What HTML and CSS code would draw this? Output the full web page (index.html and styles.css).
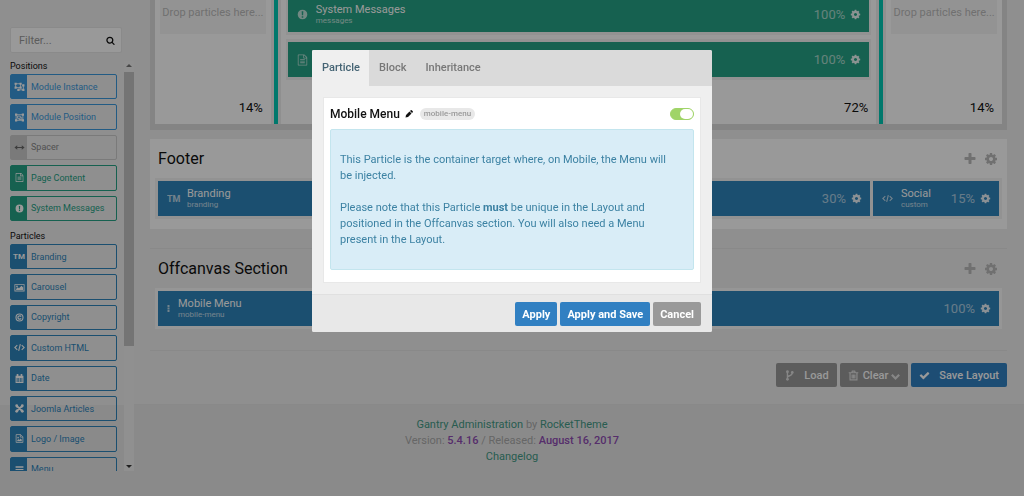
FILE: index.html
```html
<!DOCTYPE html>
<html lang="en">
<head>
    <meta charset="UTF-8">
    <meta name="viewport" content="width=device-width, initial-scale=1.0">
    <title>Gantry Layout</title>
    <link rel="stylesheet" href="styles.css">
</head>
<body>
    <svg class="sprite" aria-hidden="true">
        <symbol id="cog" viewBox="0 0 1792 1792"><path d="M1152 896q0-106-75-181t-181-75-181 75-75 181 75 181 181 75 181-75 75-181zm512-109v222q0 12-8 23t-20 13l-185 28q-19 54-39 91 35 50 107 138 10 12 10 25t-9 23q-27 37-99 108t-94 71q-12 0-26-9l-138-108q-44 23-91 38-16 136-29 186-7 28-36 28h-222q-14 0-24.5-8.5t-11.5-21.5l-28-184q-49-16-90-37l-141 107q-10 9-25 9-14 0-25-11-126-114-165-168-7-10-7-23 0-12 8-23 15-21 51-66.5t54-70.5q-27-50-41-99l-183-27q-13-2-21-12.5t-8-23.5v-222q0-12 8-23t19-13l186-28q14-46 39-92-40-57-107-138-10-12-10-24 0-10 9-23 26-36 98.5-107.5t94.5-71.5q13 0 26 10l138 107q44-23 91-38 16-136 29-186 7-28 36-28h222q14 0 24.5 8.5t11.5 21.5l28 184q49 16 90 37l142-107q9-9 24-9 13 0 25 10 129 119 165 170 7 8 7 22 0 12-8 23-15 21-51 66.5t-54 70.5q26 50 41 98l183 28q13 2 21 12.5t8 23.5z"/></symbol>
        <symbol id="plus" viewBox="0 0 1792 1792"><path d="M1600 736v192q0 40-28 68t-68 28h-416v416q0 40-28 68t-68 28h-192q-40 0-68-28t-28-68v-416h-416q-40 0-68-28t-28-68v-192q0-40 28-68t68-28h416v-416q0-40 28-68t68-28h192q40 0 68 28t28 68v416h416q40 0 68 28t28 68z"/></symbol>
        <symbol id="search" viewBox="0 0 1792 1792"><path d="M1216 832q0-185-131.5-316.5t-316.5-131.5-316.5 131.5-131.5 316.5 131.5 316.5 316.5 131.5 316.5-131.5 131.5-316.5zm512 832q0 52-38 90t-90 38q-54 0-90-38l-343-342q-179 124-399 124-143 0-273.5-55.5t-225-150-150-225-55.5-273.5 55.5-273.5 150-225 225-150 273.5-55.5 273.5 55.5 225 150 150 225 55.5 273.5q0 220-124 399l343 343q37 37 37 90z"/></symbol>
        <symbol id="check" viewBox="0 0 1792 1792"><path d="M1671 566q0 40-28 68l-724 724-136 136q-28 28-68 28t-68-28l-136-136-362-362q-28-28-28-68t28-68l136-136q28-28 68-28t68 28l294 295 656-657q28-28 68-28t68 28l136 136q28 28 28 68z"/></symbol>
        <symbol id="file-text" viewBox="0 0 1792 1792"><path d="M1596 380q28 28 48 76t20 88v1152q0 40-28 68t-68 28h-1344q-40 0-68-28t-28-68v-1600q0-40 28-68t68-28h896q40 0 88 20t76 48zm-444-244v376h376q-10-29-22-41l-313-313q-12-12-41-22zm384 1528v-1024h-416q-40 0-68-28t-28-68v-416h-768v1536h1280zm-1024-864q0-14 9-23t23-9h704q14 0 23 9t9 23v64q0 14-9 23t-23 9h-704q-14 0-23-9t-9-23v-64zm736 224q14 0 23 9t9 23v64q0 14-9 23t-23 9h-704q-14 0-23-9t-9-23v-64q0-14 9-23t23-9h704zm0 256q14 0 23 9t9 23v64q0 14-9 23t-23 9h-704q-14 0-23-9t-9-23v-64q0-14 9-23t23-9h704z"/></symbol>
        <symbol id="alert" viewBox="0 0 16 16"><path fill-rule="evenodd" d="M8 1a7 7 0 1 1 0 14A7 7 0 0 1 8 1zM6.8 3.4l.3 5.8h1.8l.3-5.8zM6.9 10.4v2.2h2.2v-2.2z"/></symbol>
        <symbol id="ungroup" viewBox="0 0 20 16"><g fill="none" stroke="currentColor" stroke-width="1.6"><path d="M3 3h9v7H3zM15 6h2v8H8v-2"/></g><path d="M1 1h4v4H1zM10 1h4v4h-4zM1 8h4v4H1zM10 8h4v4h-4zM15 4h4v4h-4zM15 12h4v4h-4zM6 12h4v4H6z"/></symbol>
        <symbol id="group" viewBox="0 0 18 16"><g fill="none" stroke="currentColor" stroke-width="1.5"><path d="M3 3h12v10H3zM5.5 5.5h5v4h-5zM12 7.5h1v4H8V10"/></g><path d="M1 1h4v4H1zM13 1h4v4h-4zM1 11h4v4H1zM13 11h4v4h-4z"/></symbol>
        <symbol id="arrows-h" viewBox="0 0 18 16"><path d="M0 8l5-4v3h8V4l5 4-5 4V9H5v3z"/></symbol>
        <symbol id="picture" viewBox="0 0 18 16"><path fill-rule="evenodd" d="M0 2h18v13H0zM1.5 3.5v10h15v-10zM3 12.500v-2l3-3 2 2 4.500-4.500L15.500 8v4.500z"/><circle cx="4.500" cy="6" r="1.500"/></symbol>
        <symbol id="copyright" viewBox="0 0 16 16"><circle cx="8" cy="8" r="6.200" fill="none" stroke="currentColor" stroke-width="2"/><path fill="none" stroke="currentColor" stroke-width="2.200" d="M10.800 6.500a3 3 0 1 0 0 3"/></symbol>
        <symbol id="code" viewBox="0 0 20 16"><path fill="none" stroke="currentColor" stroke-width="2" d="M6 3.500L1.500 8 6 12.500M14 3.500L18.500 8 14 12.500M11.500 2l-3 12"/></symbol>
        <symbol id="calendar" viewBox="0 0 16 16"><path fill-rule="evenodd" d="M1 3h2V0h3v3h4V0h3v3h2v13H1zM3 7v7h1.500V7zM6 7v7h1.400V7zM8.700 7v7h1.400V7zM11.600 7v7H13V7z"/></symbol>
        <symbol id="joomla" viewBox="0 0 16 16"><path fill="none" stroke="currentColor" stroke-width="3" d="M3 13l7-7q2-2 3.500 0M13 13L6 6Q4 4 2.500 6M3 3l7 7q2 2 3.500 0M13 3l-7 7q-2 2-3.500 0"/><circle cx="3" cy="3" r="2.500"/><circle cx="13" cy="3" r="2.500"/><circle cx="3" cy="13" r="2.500"/><circle cx="13" cy="13" r="2.500"/></symbol>
        <symbol id="file-image" viewBox="0 0 16 16"><path fill="none" stroke="currentColor" stroke-width="1.400" d="M2 1h8l4 4v10H2zM9.500 1v4.500H14"/><path d="M4 13v-2l2-2 1.500 1.500L10 8l2 2v3z"/><circle cx="5.500" cy="6.500" r="1.400"/></symbol>
        <symbol id="bars" viewBox="0 0 16 16"><path d="M1 2h14v3H1zM1 7h14v2H1zM1 11h14v3H1z"/></symbol>
        <symbol id="dots" viewBox="0 0 6 16"><path d="M1 1h4v4H1zM1 6h4v4H1zM1 11h4v4H1z"/></symbol>
        <symbol id="pencil" viewBox="0 0 16 16"><path d="M1 15l1-5 7-7 4 4-7 7zM10 2l1.500-1.500q1-.8 2 0l2 2q.8 1 0 2L14 6z"/></symbol>
        <symbol id="fork" viewBox="0 0 14 16"><path fill="none" stroke="currentColor" stroke-width="2" d="M4 3v10M11 4q0 3-3 4-4 1-4 3"/><circle cx="4" cy="2.500" r="2"/><circle cx="4" cy="13.500" r="2"/><circle cx="11" cy="3.500" r="2"/></symbol>
        <symbol id="trash" viewBox="0 0 16 16"><path fill="none" stroke="currentColor" stroke-width="1.800" d="M1 4h14M5.500 4l.8-2.500h3.400l.8 2.500M3 4v10.500h10V4M6 6.500v6M8 6.500v6M10 6.500v6"/></symbol>
        <symbol id="chevron" viewBox="0 0 16 16"><path fill="none" stroke="currentColor" stroke-width="4" d="M1.500 5L8 11.500 14.500 5"/></symbol>
    </svg>

    <div class="page">
        <main class="content">
            <div class="columns">
                <section class="column">
                    <div class="dropzone">Drop particles here...</div>
                    <span class="size">14%</span>
                </section>
                <div class="divider"></div>
                <section class="column main">
                    <div class="grid first">
                        <div class="block green">
                            <svg class="icon"><use href="#alert"/></svg>
                            <div class="block-title">System Messages<small>messages</small></div>
                            <span class="percent">100%</span>
                            <button class="settings" aria-label="Settings"><svg class="icon"><use href="#cog"/></svg></button>
                        </div>
                    </div>
                    <div class="grid">
                        <div class="block green">
                            <svg class="icon doc"><use href="#file-text"/></svg>
                            <span class="percent">100%</span>
                            <button class="settings" aria-label="Settings"><svg class="icon"><use href="#cog"/></svg></button>
                        </div>
                    </div>
                    <span class="size">72%</span>
                </section>
                <div class="divider"></div>
                <section class="column">
                    <div class="dropzone">Drop particles here...</div>
                    <span class="size">14%</span>
                </section>
            </div>

            <section class="section white">
                <header class="section-header">
                    <h4>Footer</h4>
                    <button class="tool" aria-label="Add"><svg><use href="#plus"/></svg></button>
                    <button class="tool" aria-label="Settings"><svg><use href="#cog"/></svg></button>
                </header>
                <div class="grid">
                    <div class="block blue">
                        <span class="tm">TM</span>
                        <div class="block-title">Branding<small>branding</small></div>
                        <span class="percent">30%</span>
                        <button class="settings" aria-label="Settings"><svg class="icon"><use href="#cog"/></svg></button>
                    </div>
                    <div class="block blue small">
                        <svg class="icon"><use href="#code"/></svg>
                        <div class="block-title">Social<small>custom</small></div>
                        <span class="percent">15%</span>
                        <button class="settings" aria-label="Settings"><svg class="icon"><use href="#cog"/></svg></button>
                    </div>
                </div>
            </section>

            <section class="section offcanvas">
                <header class="section-header">
                    <h4>Offcanvas Section</h4>
                    <button class="tool" aria-label="Add"><svg><use href="#plus"/></svg></button>
                    <button class="tool" aria-label="Settings"><svg><use href="#cog"/></svg></button>
                </header>
                <div class="grid">
                    <div class="block blue">
                        <svg class="icon dots"><use href="#dots"/></svg>
                        <div class="block-title">Mobile Menu<small>mobile-menu</small></div>
                        <span class="percent">100%</span>
                        <button class="settings" aria-label="Settings"><svg class="icon"><use href="#cog"/></svg></button>
                    </div>
                </div>
            </section>

            <div class="actions">
                <button class="button wide"><svg class="icon"><use href="#fork"/></svg>Load</button>
                <button class="button"><svg class="icon"><use href="#trash"/></svg>Clear<svg class="icon caret"><use href="#chevron"/></svg></button>
                <button class="button wide primary"><svg class="icon"><use href="#check"/></svg>Save Layout</button>
            </div>
        </main>

        <footer class="footer">
            <p><a href="#">Gantry Administration</a> by <a href="#">RocketTheme</a></p>
            <p>Version: <b>5.4.16</b> / Released: <b>August 16, 2017</b></p>
            <p><a href="#">Changelog</a></p>
        </footer>

        <aside class="sidebar">
            <label class="search">
                <input type="text" placeholder="Filter..." aria-label="Filter">
                <svg><use href="#search"/></svg>
            </label>
            <div class="picker">
                <div class="lists">
                    <h5>Positions</h5>
                    <ul class="positions">
                        <li class="sky"><i><svg><use href="#ungroup"/></svg></i><span>Module Instance</span></li>
                        <li class="sky"><i><svg><use href="#group"/></svg></i><span>Module Position</span></li>
                        <li class="gray"><i><svg><use href="#arrows-h"/></svg></i><span>Spacer</span></li>
                        <li class="green"><i><svg><use href="#file-text"/></svg></i><span>Page Content</span></li>
                        <li class="green"><i><svg><use href="#alert"/></svg></i><span>System Messages</span></li>
                    </ul>
                    <h5>Particles</h5>
                    <ul class="particles">
                        <li class="blue"><i>TM</i><span>Branding</span></li>
                        <li class="blue"><i><svg><use href="#picture"/></svg></i><span>Carousel</span></li>
                        <li class="blue"><i><svg><use href="#copyright"/></svg></i><span>Copyright</span></li>
                        <li class="blue"><i><svg><use href="#code"/></svg></i><span>Custom HTML</span></li>
                        <li class="blue"><i><svg><use href="#calendar"/></svg></i><span>Date</span></li>
                        <li class="blue"><i><svg><use href="#joomla"/></svg></i><span>Joomla Articles</span></li>
                        <li class="blue"><i><svg><use href="#file-image"/></svg></i><span>Logo / Image</span></li>
                        <li class="blue"><i><svg><use href="#bars"/></svg></i><span>Menu</span></li>
                    </ul>
                </div>
                <div class="scrollbar">
                    <div class="arrow up"></div>
                    <div class="thumb"></div>
                    <div class="arrow down"></div>
                </div>
            </div>
        </aside>
    </div>

    <div class="overlay">
        <div class="modal" role="dialog" aria-label="Mobile Menu">
            <nav class="tabs">
                <a href="#" class="active">Particle</a>
                <a href="#">Block</a>
                <a href="#">Inheritance</a>
            </nav>
            <div class="modal-body">
                <div class="card">
                    <div class="card-header">
                        <h4>Mobile Menu</h4>
                        <svg class="pencil"><use href="#pencil"/></svg>
                        <span class="badge">mobile-menu</span>
                        <input type="checkbox" class="toggle" aria-label="Enabled" checked>
                    </div>
                    <div class="alert">
                        <p>This Particle is the container target where, on Mobile, the Menu will be injected.</p>
                        <p>Please note that this Particle <strong>must</strong> be unique in the Layout and positioned in the Offcanvas section. You will also need a Menu present in the Layout.</p>
                    </div>
                </div>
            </div>
            <div class="modal-footer">
                <button class="button primary">Apply</button>
                <button class="button primary">Apply and Save</button>
                <button class="button">Cancel</button>
            </div>
        </div>
    </div>
</body>
</html>
```
FILE: styles.css
```css
* {
    box-sizing: border-box;
}

body {
    margin: 0;
    background: #eee;
    color: #111;
    font-family: Roboto, sans-serif;
    font-size: 11px;
    line-height: 16px;
    overflow: hidden;
}

h4, h5, p, ul {
    margin: 0;
    padding: 0;
    font-weight: 400;
}

button {
    border: 0;
    padding: 0;
    background: none;
    color: inherit;
    font-family: inherit;
    cursor: pointer;
}

a {
    text-decoration: none;
}

svg {
    fill: currentColor;
    display: block;
}

.sprite {
    display: none;
}

.page {
    display: grid;
    grid-template-columns: 134px 1fr;
    grid-template-rows: auto 1fr;
    height: 100vh;
}

/* Layout manager */
.content {
    grid-area: 1 / 2;
    padding: 0 17px 17px 16px;
    border-bottom: 1px solid #e4e4e4;
}

.columns {
    display: grid;
    grid-template-columns: 14fr 10px 72fr 10px 14fr;
    height: 130px;
    padding: 0 5px 6px;
    background: #ddd;
}

.column {
    display: flex;
    flex-direction: column;
    padding: 0 5px 7px;
    background: #fff;
}

.divider {
    background: #00c8b4;
    border: solid #eee;
    border-width: 0 3px;
}

.dropzone {
    height: 34px;
    padding-top: 5px;
    background: #f6f6f6;
    color: #bbb;
    text-align: center;
    white-space: nowrap;
}

.size {
    margin-top: auto;
    padding: 0 3px 1px;
    text-align: right;
    font-size: 13px;
}

.section {
    padding: 8px 5px 10px;
    height: 90px;
}

.white {
    margin-top: 9px;
    background: #fff;
}

.offcanvas {
    margin-top: 19px;
    height: 103px;
    border: solid #e4e4e4;
    border-width: 1px 0;
}

.section-header {
    display: flex;
    align-items: center;
    height: 24px;
    margin-bottom: 7px;
    padding: 0 4px 0 3px;
    gap: 7px;
    color: #bbb;
}

.section-header h4 {
    margin-right: auto;
    color: #111;
    font-size: 16px;
}

.tool svg {
    width: 14px;
    height: 14px;
}

.grid {
    display: flex;
    gap: 3px;
    padding: 3px;
    background: #f4f4f4;
}

.main .grid {
    margin-bottom: 4px;
    padding: 3px 2px;
}

.main .first {
    margin-top: -6px;
}

.offcanvas .grid {
    background: #fbfbfb;
}

.block {
    display: flex;
    flex: 1;
    align-items: center;
    height: 35px;
    padding: 0 8px 0 9px;
    color: #fff;
}

.block.small {
    flex: 0 0 126px;
}

.block.green {
    background: #25a285;
}

.block.blue {
    background: #2d84bb;
}

.icon {
    width: 11px;
    height: 11px;
    opacity: .7;
}

.block .doc {
    height: 12px;
}

.block .dots {
    width: 3px;
    height: 11px;
}

.tm {
    width: 12px;
    font-size: 9px;
    font-weight: 700;
    opacity: .7;
}

.block-title {
    margin-left: 8px;
    font-size: 11px;
    line-height: 12px;
}

.block-title small {
    display: block;
    font-size: 8px;
    line-height: 9px;
    opacity: .7;
}

.percent {
    margin: 0 5px 0 auto;
    font-size: 13px;
    opacity: .6;
}

.settings .icon {
    opacity: .9;
}

.actions {
    display: flex;
    justify-content: flex-end;
    gap: 3px;
    padding-top: 12px;
}

.button {
    display: inline-flex;
    align-items: center;
    height: 24px;
    padding: 0 8px;
    border-radius: 2px;
    background: #999;
    color: #fff;
    font-size: 11px;
    font-weight: 500;
}

.button .icon {
    margin-right: 4px;
}

.button .caret {
    width: 9px;
    height: 9px;
    margin: 2px 0 0 3px;
}

.wide .icon {
    margin-right: 9px;
}

.primary {
    background: #3180c2;
}

.primary .icon {
    opacity: 1;
}

.footer {
    grid-area: 2 / 1 / 3 / 3;
    padding-top: 12px;
    background: #e7e7e7;
    color: #aaa;
    text-align: center;
    font-weight: 500;
}

.footer a {
    color: #439a86;
}

.footer b {
    color: #8f4db3;
    font-weight: 500;
}

/* Particle picker */
.sidebar {
    grid-area: 1 / 1 / 3 / 2;
    z-index: 1;
    display: flex;
    flex-direction: column;
    min-height: 0;
    padding: 27px 0 25px 10px;
}

.search {
    display: flex;
    align-items: center;
    height: 26px;
    flex-shrink: 0;
    margin-right: 12px;
    padding: 0 6px 0 8px;
    border: 1px solid #e6e6e6;
    border-radius: 2px;
    background: #fff;
}

.search input {
    flex: 1;
    min-width: 0;
    padding: 0;
    border: 0;
    outline: 0;
    background: none;
    font-family: inherit;
    font-size: 11px;
}

.search input::placeholder {
    color: #999;
}

.search svg {
    width: 9px;
    height: 9px;
}

.picker {
    display: flex;
    flex: 1;
    min-height: 0;
    margin-top: 8px;
}

.lists {
    flex: 1;
    overflow: hidden;
}

h5 {
    height: 13px;
    font-size: 9px;
    line-height: 11px;
}

.positions {
    height: 147px;
    margin-bottom: 10px;
}

.particles {
    height: 238px;
}

.lists ul {
    display: grid;
    grid-auto-rows: 1fr;
    gap: 5px;
    margin-right: 7px;
    list-style: none;
}

.lists li {
    display: flex;
    border: 1px solid;
    border-radius: 2px;
    color: #2d84bb;
    font-size: 9px;
}

.lists i {
    display: flex;
    align-items: center;
    justify-content: center;
    width: 16px;
    background: #2d84bb;
    color: #fff;
    font-size: 8px;
    font-style: normal;
    font-weight: 700;
}

.lists i svg {
    width: 11px;
    height: 9px;
}

.lists span {
    flex: 1;
    align-self: center;
    padding-left: 4px;
}

.lists .sky {
    color: #3a98dc;
}

.sky i {
    background: #3a98dc;
}

.lists .green {
    color: #25a285;
}

.green i {
    background: #25a285;
}

.lists .gray {
    border-color: #ccc;
    color: #888;
}

.gray i {
    background: #ccc;
    color: #666;
}

.scrollbar {
    display: flex;
    flex-direction: column;
    width: 10px;
    background: #f1f1f1;
}

.thumb {
    height: 274px;
    margin: 2px 0 auto;
    background: #c1c1c1;
}

.arrow {
    margin: 3px auto;
    border: 3px solid transparent;
}

.up {
    border-top: 0;
    border-bottom-color: #777;
}

.down {
    border-bottom: 0;
    border-top-color: #333;
}

/* Modal */
.overlay {
    position: fixed;
    inset: 0;
    z-index: 10;
    padding-top: 50px;
    background: rgba(0, 0, 0, 0.4);
}

.modal {
    max-width: 400px;
    margin: 0 auto;
    border-radius: 2px;
    background: #efefef;
    overflow: hidden;
}

.tabs {
    display: flex;
    height: 36px;
    background: #dadada;
    font-size: 11px;
    font-weight: 500;
    line-height: 36px;
}

.tabs a {
    padding: 0 9px 0 10px;
    color: #777;
}

.tabs .active {
    background: #efefef;
    color: #456474;
}

.modal-body {
    padding: 11px;
}

.card {
    padding: 6px 6px 12px;
    border: 1px solid #e8e8e8;
    background: #fff;
}

.card-header {
    display: flex;
    align-items: center;
    height: 20px;
    margin-bottom: 5px;
}

.card-header h4 {
    font-size: 12px;
    font-weight: 500;
}

.pencil {
    width: 8px;
    height: 8px;
    margin: 0 7px 0 5px;
}

.badge {
    padding: 0 4px;
    border-radius: 6px;
    background: #e8e8e8;
    color: #999;
    font-size: 8px;
    font-weight: 500;
    line-height: 12px;
}

.toggle {
    appearance: none;
    display: flex;
    justify-content: flex-end;
    width: 24px;
    height: 12px;
    margin: 0 0 0 auto;
    border: 1px solid #a0d468;
    border-radius: 6px;
    background: #a0d468;
}

.toggle::before {
    content: "";
    width: 13px;
    border-radius: 5px;
    background: #fff;
}

.alert {
    padding: 22px 20px 21px 9px;
    border: 1px solid #c3e5ee;
    border-radius: 2px;
    background: #d9edf7;
    color: #3c82a3;
}

.alert p + p {
    margin-top: 16px;
}

.modal-footer {
    display: flex;
    justify-content: flex-end;
    gap: 3px;
    padding: 7px 11px 6px;
    border-top: 1px solid #e0e0e0;
    background: #e8e8e8;
}

.modal-footer .button {
    padding: 0 7px;
    font-weight: 700;
}
```
